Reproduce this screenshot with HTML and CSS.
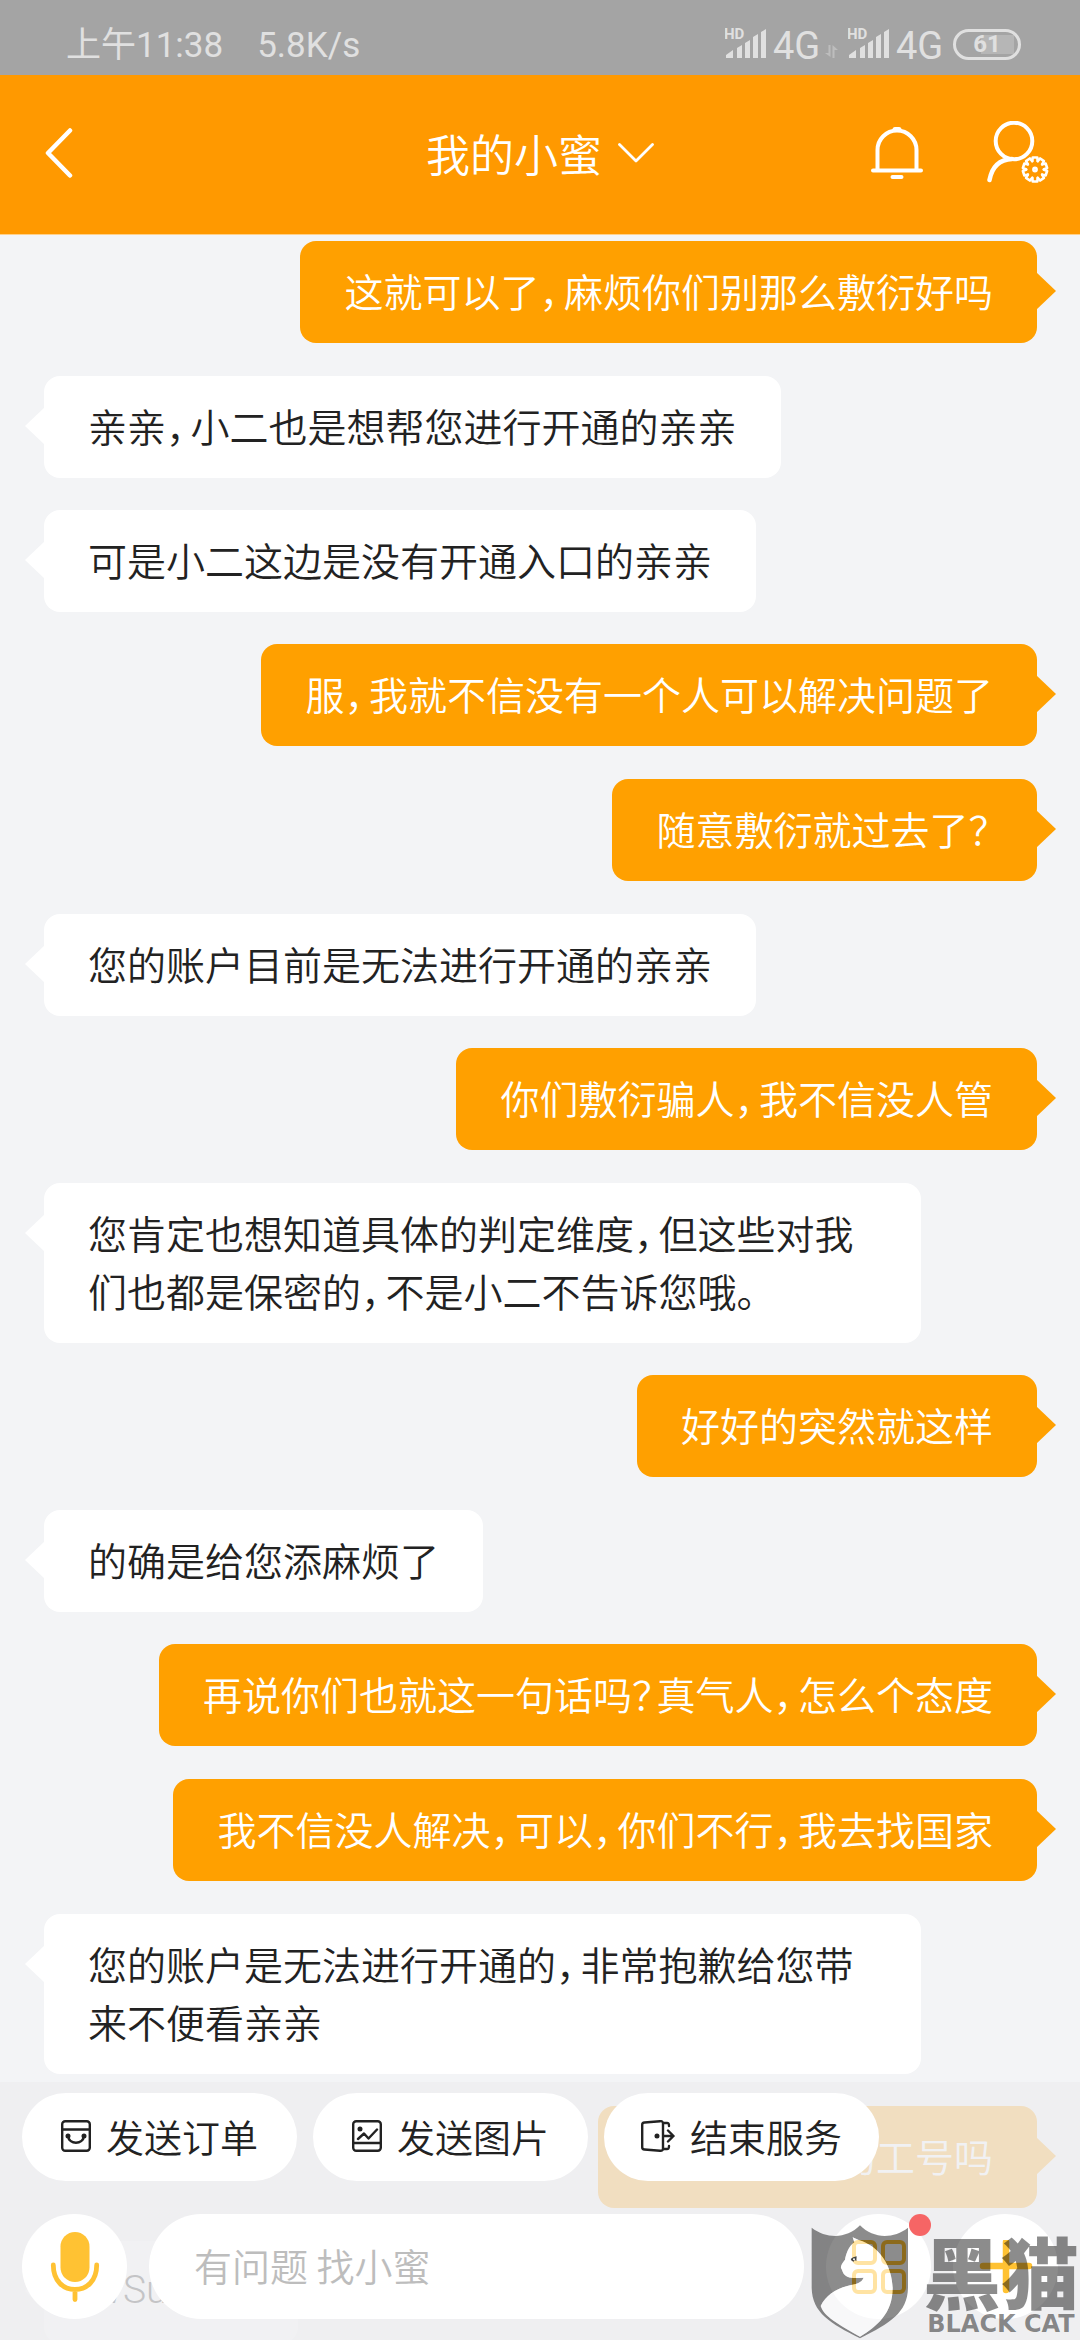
FILE: index.html
```html
<!DOCTYPE html>
<html lang="zh-CN">
<head>
<meta charset="utf-8">
<meta name="viewport" content="width=device-width, initial-scale=1">
<title>我的小蜜</title>
<link rel="stylesheet" href="styles.css">
</head>
<body>
<svg class="defs" width="0" height="0" aria-hidden="true">
  <defs>
    <path id="tooth" d="M-2.7-8.4L-2.3-12H2.3L2.7-8.4"/>
    <g id="signal">
      <text x="-1" y="11" class="hd">HD</text>
      <path d="M1 30v-3l7-5v8zM12 30V20l5-3v13zM20 30V15l5-3v18zM28 30V9l5-3v24zM36 30V4l5-3v29z"/>
    </g>
  </defs>
</svg>
<div class="app">
  <div class="status">
    <div class="status-left"><span>上午11:38</span><span>5.8K/s</span></div>
    <div class="status-right">
      <svg class="signal" viewBox="0 0 41 31"><use href="#signal"/></svg>
      <span class="net">4G</span>
      <svg class="updown" viewBox="0 0 13 13"><path d="M3.500 0h2v12L0 8h3.500zM7.500 13V0L13 5H9.500v8z"/></svg>
      <svg class="signal" viewBox="0 0 41 31"><use href="#signal"/></svg>
      <span class="net">4G</span>
      <span class="battery">61</span>
    </div>
  </div>

  <header class="header">
    <button class="icon-btn back" aria-label="返回">
      <svg width="28" height="50" viewBox="0 0 28 50"><path d="M25 2.500L3 25l22 22.500" stroke-width="4.500"/></svg>
    </button>
    <button class="title"><span>我的小蜜</span>
      <svg width="36" height="20" viewBox="0 0 36 20"><path d="M1.500 1.500L18 18 34.500 1.500" stroke-width="2.800"/></svg>
    </button>
    <div class="actions">
      <button class="icon-btn" aria-label="通知">
        <svg width="52" height="54" viewBox="0 0 52 54"><path d="M6.500 44V24a19.500 19.500 0 0 1 39 0v20M2 44.500h48M21.500 51h9" stroke-width="4"/><path d="M24 3.500h4" stroke-width="5"/></svg>
      </button>
      <button class="icon-btn" aria-label="个人设置">
        <svg width="62" height="64" viewBox="0 0 62 64">
          <circle cx="27" cy="20" r="18.300" stroke-width="4"/>
          <path d="M2.500 59C5 46 12 38.500 25 38" stroke-width="4.500"/>
          <g transform="translate(48 48.500)" stroke-width="2.600">
            <use href="#tooth"/><use href="#tooth" transform="rotate(36)"/><use href="#tooth" transform="rotate(72)"/><use href="#tooth" transform="rotate(108)"/><use href="#tooth" transform="rotate(144)"/><use href="#tooth" transform="rotate(180)"/><use href="#tooth" transform="rotate(216)"/><use href="#tooth" transform="rotate(252)"/><use href="#tooth" transform="rotate(288)"/><use href="#tooth" transform="rotate(324)"/>
            <circle r="1.600"/>
          </g>
        </svg>
      </button>
    </div>
  </header>

  <main class="chat">
    <p class="msg out">这就可以了<span class="pause">，</span>麻烦你们别那么敷衍好吗</p>
    <p class="msg in">亲亲<span class="pause">，</span>小二也是想帮您进行开通的亲亲</p>
    <p class="msg in">可是小二这边是没有开通入口的亲亲</p>
    <p class="msg out">服<span class="pause">，</span>我就不信没有一个人可以解决问题了</p>
    <p class="msg out">随意敷衍就过去了<span class="pause">？</span></p>
    <p class="msg in">您的账户目前是无法进行开通的亲亲</p>
    <p class="msg out">你们敷衍骗人<span class="pause">，</span>我不信没人管</p>
    <p class="msg in">您肯定也想知道具体的判定维度<span class="pause">，</span>但这些对我们也都是保密的<span class="pause">，</span>不是小二不告诉您哦。</p>
    <p class="msg out">好好的突然就这样</p>
    <p class="msg in">的确是给您添麻烦了</p>
    <p class="msg out">再说你们也就这一句话吗<span class="pause">？</span>真气人<span class="pause">，</span>怎么个态度</p>
    <p class="msg out">我不信没人解决<span class="pause">，</span>可以<span class="pause">，</span>你们不行<span class="pause">，</span>我去找国家</p>
    <p class="msg in">您的账户是无法进行开通的<span class="pause">，</span>非常抱歉给您带来不便看亲亲</p>
    <p class="msg out">能给我你们的工号吗</p>
    <p class="msg in code">WSu1234</p>
  </main>

  <footer class="composer">
    <div class="shortcuts">
      <button class="pill">
        <svg width="30" height="32" viewBox="0 0 30 32"><rect x="1.200" y="1.200" width="27.600" height="29.600" rx="3"/><path d="M1 9.500h28M7 16c1 9 15 9 16 0"/><circle cx="7" cy="16" r="1.300"/><circle cx="23" cy="16" r="1.300"/></svg>
        <span>发送订单</span>
      </button>
      <button class="pill">
        <svg width="30" height="32" viewBox="0 0 30 32"><rect x="1.200" y="1.200" width="27.600" height="29.600" rx="3"/><path d="M1 23h28M6 19l6-5.500 4.500 5L25 9.500"/><circle cx="8" cy="9" r="1.300"/></svg>
        <span>发送图片</span>
      </button>
      <button class="pill">
        <svg width="34" height="32" viewBox="0 0 34 32"><path d="M3.500 2.500L19 1.200c2-.2 3 .5 3 2.300v25c0 1.800-1 2.400-3 2.300L3.500 29.500c-1.500-.1-2.300-.8-2.300-2.300V4.800c0-1.500.8-2.200 2.300-2.300zM22 3h4c1.500 0 2 .5 2 3M22 29h4c1.500 0 2-.5 2-3M22 16h10.500M27 10.500l5.500 5.500-5.500 5.500"/><circle cx="16" cy="16" r="1.300"/></svg>
        <span>结束服务</span>
      </button>
    </div>
    <div class="entry">
      <button class="round" aria-label="语音">
        <svg width="50" height="70" viewBox="0 0 50 70"><rect x="10.500" y="0" width="29" height="50" rx="14.500" fill="#ffc233"/><path d="M3.300 33c0 16 10 24.500 21.700 24.500S46.700 49 46.700 33M25 58v9.500" fill="none" stroke="#ffc233" stroke-width="4.800" stroke-linecap="round"/></svg>
      </button>
      <input class="field" type="text" aria-label="消息" placeholder="有问题 找小蜜">
      <button class="round" aria-label="更多服务">
        <svg width="54" height="54" viewBox="0 0 54 54" fill="none" stroke="#ffc233" stroke-width="4"><rect x="2" y="2" width="21" height="21" rx="4"/><rect x="31" y="2" width="21" height="21" rx="4"/><rect x="2" y="31" width="21" height="21" rx="4"/><rect x="31" y="31" width="21" height="21" rx="4"/></svg>
        <span class="dot"></span>
      </button>
      <button class="round" aria-label="添加">
        <svg width="54" height="54" viewBox="0 0 54 54" fill="none" stroke="#ffc233" stroke-width="6.500" stroke-linecap="round"><path d="M27 2v48M4 26h46"/></svg>
      </button>
    </div>
  </footer>

  <div class="watermark">
    <svg class="shield" width="100" height="117" viewBox="60 70 300 351">
      <path fill="#000" fill-opacity=".45" fill-rule="evenodd" d="M65 84C110 118 170 118 210 77C250 118 310 118 354 84V265C352 340 300 370 210 416C120 370 67 340 65 265zM92 319C102 345 122 362 210 411C262 380 308 340 308 265C306 200 270 140 206 121L188 113L193 128C175 140 168 165 165 180C155 192 152 200 153 205C158 212 158 225 172 231C190 238 205 234 221 234C214 250 200 252 180 257C140 266 108 285 92 319z"/>
      <path fill="#fff" fill-opacity=".55" d="M92 319C102 345 122 362 210 411C262 380 308 340 308 265C306 200 270 140 206 121L188 113L193 128C175 140 168 165 165 180C155 192 152 200 153 205C158 212 158 225 172 231C190 238 205 234 221 234C214 250 200 252 180 257C140 266 108 285 92 319z"/>
      <path fill="#444" d="M182 178q6-6 18-8l-1 14-5-3-3 5-6-3z"/><circle cx="192" cy="179" r="3" fill="#fff"/>
    </svg>
    <div class="brand"><strong>黑猫</strong><b>BLACK CAT</b></div>
  </div>
</div>
</body>
</html>
```
FILE: styles.css
```css
* { box-sizing: border-box; }

body {
  margin: 0;
  font-family: "Noto Sans CJK SC", sans-serif;
  font-size: 39px;
  font-weight: 350;
  line-height: 58px;
  color: #222;
}

button {
  margin: 0;
  padding: 0;
  border: 0;
  background: none;
  font: inherit;
  color: inherit;
}

svg { display: block; flex: none; }
.defs { position: absolute; }

.app {
  position: relative;
  display: flex;
  flex-direction: column;
  height: 100vh;
  overflow: hidden;
  background: #f3f4f6;
}

/* status bar */
.status {
  flex: none;
  display: flex;
  justify-content: space-between;
  height: 75px;
  padding: 17px 59px 0 66px;
  background: #a4a4a4;
  color: #e0e0e0;
  font-family: Roboto, "Noto Sans CJK SC", sans-serif;
  font-size: 35px;
  font-weight: 400;
  line-height: 58px;
}
.status-left { display: flex; gap: 34px; }
.status-right { display: flex; }
.signal { width: 41px; height: 31px; margin-top: 11px; fill: #e0e0e0; }
.hd { font: 700 15px Roboto, sans-serif; }
.net { width: 48px; margin-left: 7px; font-size: 38px; }
.updown { width: 13px; height: 13px; margin: 28px 10px 0 4px; fill: #bdbdbd; }
.battery {
  width: 68px;
  height: 31px;
  margin: 12px 0 0 9px;
  border: 3px solid #e0e0e0;
  border-radius: 16px;
  background: linear-gradient(#b6b6b6, #b6b6b6) 25px 3px / 33px 19px no-repeat;
  font-size: 24px;
  font-weight: 700;
  line-height: 25px;
  text-align: center;
}

/* header */
.header {
  flex: none;
  display: grid;
  grid-template-columns: 1fr auto 1fr;
  align-items: center;
  height: 160px;
  padding: 0 31px 4px;
  border-bottom: 1px solid #ffd08a;
  background: #ff9900;
  color: #fff;
}
.header svg { fill: none; stroke: #fff; stroke-linecap: round; stroke-linejoin: round; }
.back { justify-self: start; margin-left: 14px; }
.title {
  display: flex;
  align-items: center;
  gap: 16px;
  font-size: 44px;
  line-height: 64px;
}
.actions { display: flex; justify-content: flex-end; align-items: center; gap: 64px; }

/* conversation */
.chat {
  flex: 1;
  min-height: 0;
  display: flex;
  flex-direction: column;
  align-items: flex-start;
  padding: 6px 43px 0 44px;
}
.msg {
  position: relative;
  flex: none;
  max-width: 877px;
  margin: 0 0 32px;
  padding: 20px 44px 24px;
  border-radius: 16px;
  background: #fff;
}
.msg::before {
  content: "";
  position: absolute;
  top: 31px;
  left: -19px;
  width: 20px;
  height: 38px;
  background: inherit;
  clip-path: polygon(0 50%, 100% 0, 100% 100%);
}
.out {
  align-self: flex-end;
  max-width: 890px;
  margin-bottom: 33px;
  background: #ffa000;
  color: #fff;
}
.out::before {
  left: auto;
  right: -19px;
  clip-path: polygon(100% 50%, 0 0, 0 100%);
}
.pause { margin: 0 5px 0 0; font-feature-settings: "halt"; }
.code { font-family: Roboto, sans-serif; font-weight: 300; }

/* composer panel laid over the end of the conversation */
.composer {
  position: absolute;
  left: 0;
  right: 0;
  bottom: 0;
  padding: 11px 22px 21px;
  background: rgba(237, 238, 240, .8);
  font-size: 38px;
}
.shortcuts { display: flex; gap: 16px; margin-bottom: 33px; }
.pill {
  display: flex;
  align-items: center;
  justify-content: center;
  gap: 15px;
  width: 275px;
  height: 88px;
  padding-bottom: 2px;
  border-radius: 44px;
  background: #fff;
}
.pill svg { fill: none; stroke: #222; stroke-width: 2.400; stroke-linecap: round; stroke-linejoin: round; }
.entry { display: flex; gap: 22px; }
.round {
  position: relative;
  flex: none;
  display: grid;
  place-items: center;
  width: 105px;
  height: 105px;
  border-radius: 50%;
  background: #fff;
}
.field {
  flex: 1;
  min-width: 0;
  height: 105px;
  padding: 0 45px 4px;
  border: 0;
  border-radius: 53px;
  outline: 0;
  background: #fff;
  font: inherit;
}
.field::placeholder { color: #bdbdbd; opacity: 1; }
.dot {
  position: absolute;
  top: 0;
  right: 0;
  width: 22px;
  height: 22px;
  border-radius: 50%;
  background: #f66565;
}

/* complaint platform mark over the corner */
.watermark {
  position: absolute;
  right: 1px;
  bottom: 0;
  display: flex;
  align-items: flex-end;
  gap: 13px;
  pointer-events: none;
}
.brand {
  display: flex;
  flex-direction: column;
  align-items: center;
  color: rgba(0, 0, 0, .45);
}
.brand strong { font-size: 78px; font-weight: 900; line-height: 76px; }
.brand b {
  font-family: "DejaVu Sans", sans-serif;
  font-size: 24px;
  font-weight: 700;
  line-height: 32px;
}
```
